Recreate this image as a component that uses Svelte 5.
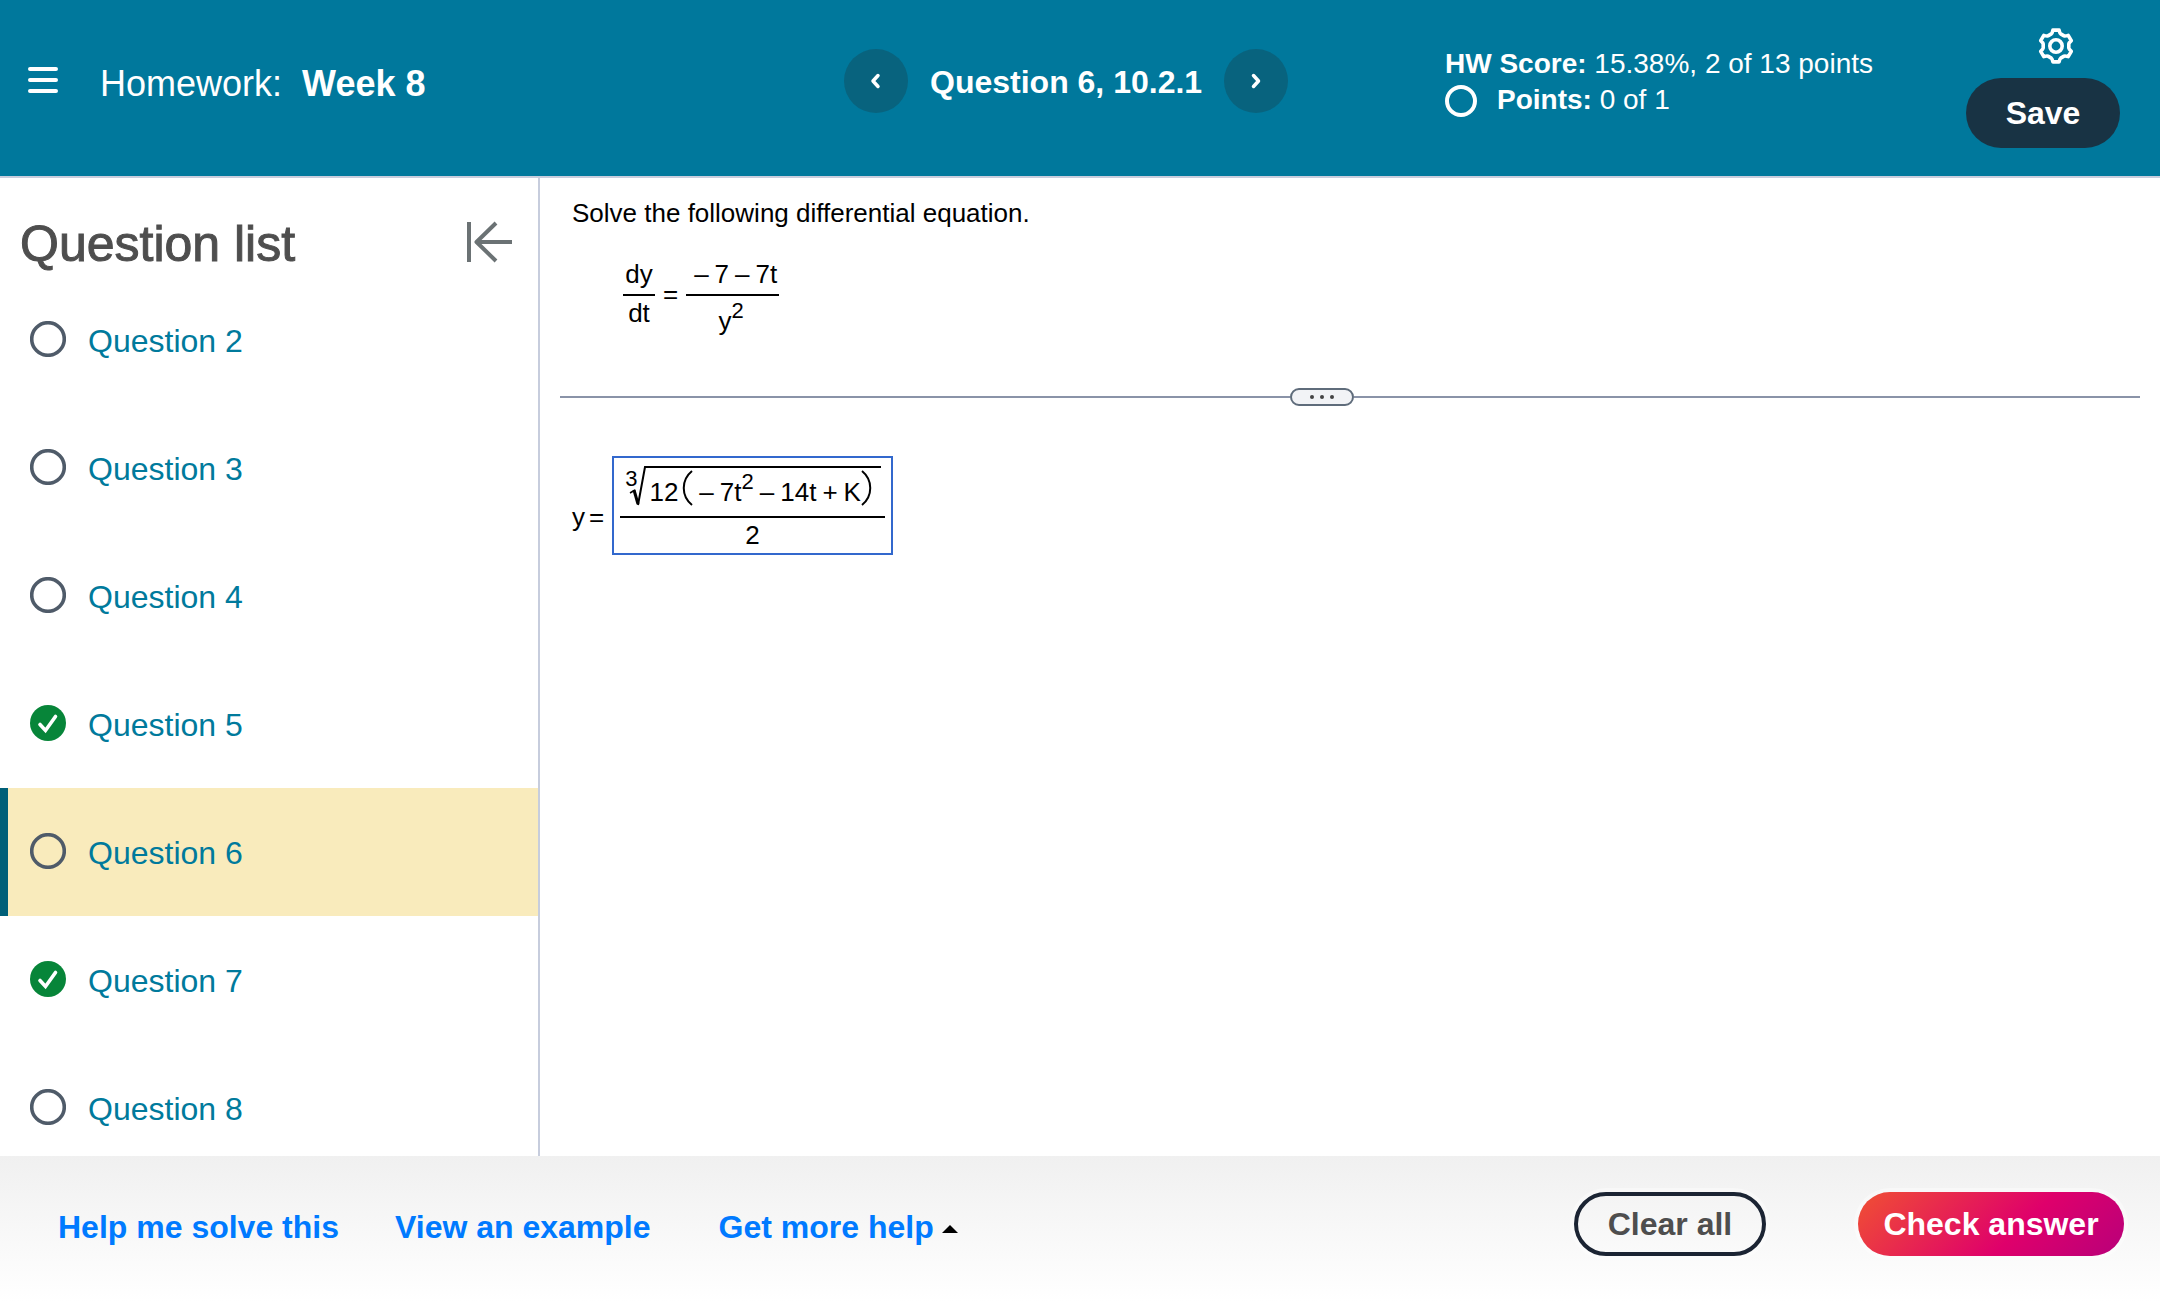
<script lang="ts">
	type Question = {
		number: number;
		done: boolean;
	};

	const questions: Question[] = [
		{ number: 2, done: false },
		{ number: 3, done: false },
		{ number: 4, done: false },
		{ number: 5, done: true },
		{ number: 6, done: false },
		{ number: 7, done: true },
		{ number: 8, done: false }
	];

	let current = $state(6);
</script>

<svelte:head>
	<title>Homework: Week 8</title>
</svelte:head>

<div class="app">
	<header class="topbar">
		<div class="topbar__title">
			<button class="icon-button" aria-label="Menu">
				<svg width="30" height="28" viewBox="0 0 30 28" stroke="#fff" stroke-width="4" stroke-linecap="round">
					<path d="M2 3h26M2 14h26M2 25h26" />
				</svg>
			</button>
			<h1>Homework: <strong>Week 8</strong></h1>
		</div>

		<nav class="pager" aria-label="Question">
			<button class="pager__button" aria-label="Previous question">
				<svg width="12" height="18" viewBox="0 0 12 18"><path d="M8 3.500L3 9l5 5.500" /></svg>
			</button>
			<h2>Question 6, 10.2.1</h2>
			<button class="pager__button" aria-label="Next question">
				<svg width="12" height="18" viewBox="0 0 12 18"><path d="M3.500 3.500L8.500 9l-5 5.500" /></svg>
			</button>
		</nav>

		<div class="score">
			<p><strong>HW Score:</strong> 15.38%, 2 of 13 points</p>
			<p class="score__points">
				<span class="score__ring"></span>
				<span><strong>Points:</strong> 0 of 1</span>
			</p>
		</div>

		<div class="actions">
			<button class="icon-button actions__settings" aria-label="Settings">
				<svg width="36" height="36" viewBox="0 0 36 36" fill="none" stroke="#fff" stroke-width="3.600" stroke-linejoin="round">
					<path d="M14.9 2.100L21.100 2.100Q21.800 5.200 22.700 5.900L26.100 7.900Q27.200 8.300 30.200 7.400L33.300 12.700Q31 14.800 30.800 16L30.800 20Q31 21.200 33.300 23.300L30.200 28.600Q27.200 27.700 26.100 28.100L22.700 30.100Q21.800 30.800 21.100 33.900L14.900 33.900Q14.200 30.800 13.300 30.100L9.900 28.100Q8.800 27.700 5.800 28.600L2.700 23.300Q5 21.200 5.200 20L5.200 16Q5 14.800 2.700 12.700L5.800 7.400Q8.800 8.300 9.900 7.900L13.300 5.900Q14.200 5.200 14.900 2.100z" />
					<circle cx="18" cy="18" r="6.200" />
				</svg>
			</button>
			<button class="save">Save</button>
		</div>
	</header>

	<div class="body">
		<aside class="sidebar">
			<div class="sidebar__header">
				<h2>Question list</h2>
				<button class="icon-button" aria-label="Collapse question list">
					<svg width="46" height="42" viewBox="0 0 46 42" fill="none" stroke="#6b7274" stroke-width="4">
						<path d="M2 1v40M45 21H10M29 2L9.500 21L29 40" stroke-linejoin="round" />
					</svg>
				</button>
			</div>
			<ul>
				{#each questions as question}
					<li class:active={question.number === current}>
						<button class="question" onclick={() => (current = question.number)}>
							{#if question.done}
								<svg width="36" height="36" viewBox="0 0 36 36" fill="none">
									<circle cx="18" cy="18" r="18" fill="#078539" />
									<path d="M10 19.500l5.500 6L25.500 11.500" stroke="#fff" stroke-width="3.600" stroke-linecap="round" />
								</svg>
							{:else}
								<svg width="36" height="36" viewBox="0 0 36 36" fill="none">
									<circle cx="18" cy="18" r="16.300" stroke="#4f5b69" stroke-width="3.600" />
								</svg>
							{/if}
							<span>Question {question.number}</span>
						</button>
					</li>
				{/each}
			</ul>
		</aside>

		<main class="content">
			<p class="prompt">Solve the following differential equation.</p>

			<div class="equation">
				<span class="fraction">
					<span class="fraction__top">dy</span>
					<span class="fraction__bottom">dt</span>
				</span>
				<span class="equals">=</span>
				<span class="fraction fraction--wide">
					<span class="fraction__top"><span class="op">–</span>7<span class="op">–</span>7t</span>
					<span class="fraction__bottom fraction__bottom--power">y<sup>2</sup></span>
				</span>
			</div>

			<div class="divider">
				<button class="divider__handle" aria-label="Resize panes"><i></i><i></i><i></i></button>
			</div>

			<div class="answer">
				<span class="answer__label"><span>y</span><span>=</span></span>
				<div class="answer__box" role="math" aria-label="Cube root of 12(-7t^2 - 14t + K), over 2">
					<span class="root">
						<span class="root__index">3</span>
						<svg width="17" height="42" viewBox="0 0 17 42" fill="none" stroke="#000">
							<path d="M1 27l5-3" stroke-width="1.500" />
							<path d="M5 24l4 14" stroke-width="3" />
							<path d="M9 39L16 1h1" stroke-width="2" />
						</svg>
						<span class="root__body">
							<span class="root__text">12</span>
							<svg class="paren-open" width="11" height="36" viewBox="0 0 11 36"><path d="M10 1C-1 10-1 26 10 35" /></svg>
							<span class="root__text"><span class="op">–</span>7t<sup>2</sup><span class="op">–</span>14t<span class="op">+</span>K</span>
							<svg width="11" height="36" viewBox="0 0 11 36"><path d="M1 1C12 10 12 26 1 35" /></svg>
						</span>
					</span>
					<span class="answer__denominator">2</span>
				</div>
			</div>
		</main>
	</div>

	<footer class="footer">
		<div class="footer__links">
			<a href="#solve">Help me solve this</a>
			<a href="#example">View an example</a>
			<button class="more">
				Get more help
				<svg width="16" height="8" viewBox="0 0 16 8"><path d="M0 8L8 0l8 8z" /></svg>
			</button>
		</div>
		<div class="footer__buttons">
			<button class="pill pill--clear">Clear all</button>
			<button class="pill pill--check">Check answer</button>
		</div>
	</footer>
</div>

<style>
	:global(body) {
		margin: 0;
		font-family: "Liberation Sans", Arial, sans-serif;
		background: #fff;
	}

	h1,
	h2,
	p,
	ul {
		margin: 0;
		padding: 0;
	}

	button {
		font: inherit;
		border: none;
		padding: 0;
		background: none;
		cursor: pointer;
	}

	svg {
		display: block;
		flex: none;
	}

	.app {
		height: 100vh;
		display: flex;
		flex-direction: column;
	}

	.topbar {
		display: grid;
		grid-template-columns: 844fr 601fr 521fr 194fr;
		box-sizing: border-box;
		height: 178px;
		flex: none;
		background: #00789c;
		border-bottom: 2px solid #c7cddd;
		color: #fff;
	}

	.topbar__title {
		display: flex;
		align-items: flex-start;
		gap: 42px;
		padding: 66px 0 0 28px;
	}

	.topbar h1 {
		font-size: 36px;
		line-height: 36px;
		font-weight: 400;
	}

	.topbar h1 strong {
		margin-left: 10px;
	}

	.pager {
		display: flex;
		align-items: center;
		align-self: start;
		margin-top: 49px;
		gap: 22px;
		white-space: nowrap;
	}

	.pager h2 {
		padding-top: 2px;
		font-size: 32px;
		line-height: 36px;
	}

	.pager__button {
		display: flex;
		align-items: center;
		justify-content: center;
		width: 64px;
		height: 64px;
		flex: none;
		border-radius: 50%;
		background: #08637e;
	}

	.pager__button path {
		fill: none;
		stroke: #fff;
		stroke-width: 3.5;
		stroke-linecap: round;
		stroke-linejoin: round;
	}

	.score {
		padding-top: 46px;
		font-size: 28px;
		line-height: 36px;
		white-space: nowrap;
	}

	.score__points {
		display: flex;
		gap: 20px;
	}

	.score__ring {
		box-sizing: border-box;
		width: 32px;
		height: 32px;
		margin-top: 3px;
		border: 4px solid #fff;
		border-radius: 50%;
	}

	.actions {
		display: flex;
		flex-direction: column;
		align-items: flex-end;
		gap: 14px;
		padding: 28px 40px 0 0;
	}

	.actions__settings {
		margin-right: 46px;
	}

	.save {
		width: 154px;
		height: 70px;
		border-radius: 35px;
		background: #183344;
		color: #fff;
		font-size: 32px;
		font-weight: 700;
	}

	.body {
		flex: 1;
		min-height: 0;
		display: flex;
	}

	.sidebar {
		box-sizing: border-box;
		width: 25%;
		overflow: hidden;
		border-right: 2px solid #c7cddd;
	}

	.sidebar__header {
		display: flex;
		align-items: center;
		justify-content: space-between;
		box-sizing: border-box;
		height: 98px;
		padding: 30px 25px 0 20px;
	}

	.sidebar h2 {
		padding-top: 4px;
		font-size: 50px;
		line-height: 56px;
		font-weight: 400;
		color: #4e4e4e;
		-webkit-text-stroke: 1px #4e4e4e;
	}

	.sidebar ul {
		list-style: none;
	}

	.sidebar li {
		border-left: 8px solid transparent;
	}

	.sidebar li.active {
		border-color: #005f78;
		background: #f9ebbc;
	}

	.question {
		display: flex;
		align-items: center;
		gap: 22px;
		width: 100%;
		height: 128px;
		padding: 0 22px 2px;
		color: #007a9c;
		font-size: 32px;
	}

	.question span {
		padding-top: 4px;
	}

	.content {
		flex: 1;
		padding: 20px 20px 0;
		font-size: 26px;
		line-height: 30px;
		color: #000;
	}

	.prompt {
		padding-left: 12px;
	}

	.equation {
		display: flex;
		align-items: flex-start;
		gap: 8px;
		margin: 31px 0 0 63px;
	}

	.fraction {
		display: flex;
		flex-direction: column;
		text-align: center;
		width: 32px;
	}

	.fraction--wide {
		width: 93px;
	}

	.fraction__top {
		padding-bottom: 5px;
		border-bottom: 2px solid #000;
	}

	.fraction__bottom {
		padding-top: 2px;
	}

	.fraction__bottom--power {
		padding: 10px 3px 0 0;
	}

	.equals {
		padding-top: 20px;
	}

	.op {
		margin: 0 6px;
	}

	sup {
		font-size: 22px;
		line-height: 0;
		vertical-align: 12px;
	}

	.divider {
		display: flex;
		align-items: center;
		margin-top: 52px;
	}

	.divider::before,
	.divider::after {
		content: "";
		flex: 730;
		height: 2px;
		background: #8a93a8;
	}

	.divider::after {
		flex: 786;
	}

	.divider__handle {
		display: flex;
		align-items: center;
		justify-content: center;
		gap: 6px;
		box-sizing: border-box;
		width: 64px;
		height: 18px;
		border: 2px solid #5f6c7b;
		border-radius: 9px;
		background: #f2f3f6;
	}

	.divider__handle i {
		width: 4px;
		height: 4px;
		border-radius: 50%;
		background: #444;
	}

	.answer {
		display: flex;
		align-items: center;
		gap: 8px;
		margin: 50px 0 0 12px;
	}

	.answer__label {
		display: flex;
		gap: 4px;
		padding-top: 22px;
	}

	.answer__box {
		display: flex;
		flex-direction: column;
		padding: 8px 6px 3px;
		border: 2px solid #3268cd;
	}

	.root {
		display: flex;
		padding: 0 4px 8px 5px;
		border-bottom: 2px solid #000;
	}

	.root > svg {
		margin-left: -8px;
	}

	.root__index {
		padding-top: 2px;
		font-size: 22px;
		line-height: 22px;
	}

	.root__body {
		display: flex;
		align-items: center;
		height: 40px;
		padding: 0 9px 0 3px;
		border-top: 2px solid #000;
		white-space: nowrap;
	}

	.root__text {
		padding-top: 7px;
	}

	.root__body path {
		fill: none;
		stroke: #000;
		stroke-width: 2;
	}

	.paren-open {
		margin-left: 4px;
	}

	.answer__denominator {
		padding-top: 2px;
		text-align: center;
	}

	.footer {
		display: flex;
		justify-content: space-between;
		align-items: flex-start;
		box-sizing: border-box;
		height: 146px;
		flex: none;
		padding: 36px 36px 0 58px;
		background: linear-gradient(#f0f0f0, #fff);
		font-size: 32px;
		font-weight: 700;
	}

	.footer__links {
		display: flex;
		gap: 56px;
		padding-top: 17px;
		line-height: 36px;
	}

	.footer a {
		color: #007aff;
		text-decoration: none;
	}

	.more {
		display: flex;
		align-items: center;
		gap: 8px;
		margin-left: 12px;
		color: #007aff;
	}

	.more svg {
		fill: #000;
		margin-top: 4px;
	}

	.footer__buttons {
		display: flex;
		gap: 92px;
	}

	.pill {
		box-sizing: border-box;
		height: 64px;
		border-radius: 32px;
		box-shadow: 0 0 0 4px rgba(255, 255, 255, 0.4);
	}

	.pill--clear {
		width: 192px;
		border: 4px solid #1b2433;
		color: #4e4e4e;
	}

	.pill--check {
		width: 266px;
		background: linear-gradient(135deg, #f05033, #df006b 60%, #b8007a);
		color: #fff;
	}
</style>
